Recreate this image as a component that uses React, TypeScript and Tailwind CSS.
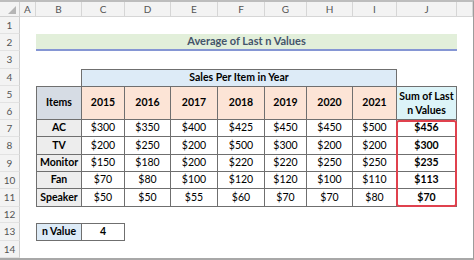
import React from "react";

const letters = ["A", "B", "C", "D", "E", "F", "G", "H", "I", "J", ""];
const colStart = [
  "col-start-1",
  "col-start-2",
  "col-start-3",
  "col-start-4",
  "col-start-5",
  "col-start-6",
  "col-start-7",
  "col-start-8",
  "col-start-9",
  "col-start-10",
  "col-start-11",
  "col-start-12",
];
const rowStart = [
  "row-start-1",
  "row-start-2",
  "row-start-3",
  "row-start-4",
  "row-start-5",
  "row-start-6",
  "row-start-7",
  "row-start-8",
  "row-start-9",
  "row-start-10",
  "row-start-11",
  "row-start-12",
  "row-start-13",
  "row-start-14",
  "row-start-15",
];

const years = [2015, 2016, 2017, 2018, 2019, 2020, 2021];

const items = [
  { name: "AC", sales: [300, 350, 400, 425, 450, 450, 500], sum: 456 },
  { name: "TV", sales: [200, 250, 200, 500, 300, 200, 200], sum: 300 },
  { name: "Monitor", sales: [150, 180, 200, 220, 220, 250, 250], sum: 235 },
  { name: "Fan", sales: [70, 80, 100, 120, 120, 100, 110], sum: 113 },
  { name: "Speaker", sales: [50, 50, 55, 60, 70, 70, 80], sum: 70 },
];

const line = "border-[#6f6f6f]";
const center = "flex items-center justify-center";

export default function App() {
  return (
    <div className="w-[474px] h-[260px] overflow-hidden bg-white border-t-2 border-t-[#bdbdbd] border-b-2 border-b-[#a8a8a8] border-r border-r-[#9c9c9c] font-[Lato,sans-serif] text-black">
      <div className="grid grid-cols-[20px_16px_46px_43px_46px_47px_47px_42px_46px_44px_60px_16px] grid-rows-[15px_17px_17px_18px_17px_17px_17px_17px_18px_17px_17px_18px_16px_18px_17px]">
        {/* corner */}
        <div className="col-start-1 row-start-1 relative bg-[#f3f3f3] border-r border-b border-[#d0d0d0]">
          <svg className="absolute right-[3px] bottom-[2px]" width="8" height="8" viewBox="0 0 8 8">
            <polygon points="8,0 8,8 0,8" fill="#b5b5b5" />
          </svg>
        </div>

        {/* column letters */}
        {letters.map((l, i) => (
          <div
            key={"c" + i}
            className={`${colStart[i + 1]} row-start-1 ${center} bg-[#f3f3f3] border-r border-b border-[#d6d6d6] text-[10px] text-[#555]`}
          >
            {l}
          </div>
        ))}

        {/* row numbers */}
        {Array.from({ length: 14 }).map((_, i) => (
          <div
            key={"r" + i}
            className={`col-start-1 ${rowStart[i + 1]} ${center} bg-[#f3f3f3] border-r border-r-[#cfcfcf] border-b border-b-[#e2e2e2] text-[10px] text-[#555]`}
          >
            {i + 1}
          </div>
        ))}

        {/* title */}
        <div
          className={`col-start-3 col-span-9 row-start-3 ${center} bg-[#e2efda] border-b-2 border-[#8596d4] text-[11px] font-bold text-[#44546a]`}
        >
          Average of Last n Values
        </div>

        {/* sales header */}
        <div
          className={`col-start-4 col-span-7 row-start-5 -ml-px ${center} bg-[#ddebf7] border-t border-l border-r ${line} text-[10.5px] font-bold`}
        >
          Sales Per Item in Year
        </div>

        {/* table header */}
        <div
          className={`col-start-3 row-start-6 row-span-2 ${center} bg-[#d6dce4] border ${line} text-[10.5px] font-bold`}
        >
          Items
        </div>
        {years.map((y, i) => (
          <div
            key={y}
            className={`${colStart[i + 3]} row-start-6 row-span-2 ${center} bg-[#fce4d6] border-t border-r border-b ${line} text-[10.5px] font-bold`}
          >
            {y}
          </div>
        ))}
        <div
          className={`col-start-11 row-start-6 row-span-2 flex flex-col items-center justify-center bg-[#dcf4f8] border-t border-r border-b ${line} text-[10.5px] font-bold leading-[14px]`}
        >
          <span>Sum of Last</span>
          <span>n Values</span>
        </div>

        {/* table body */}
        {items.map((it, r) => (
          <React.Fragment key={it.name}>
            <div
              className={`col-start-3 ${rowStart[r + 7]} ${center} bg-[#ededed] border-l border-r border-b ${line} text-[10.5px] font-bold`}
            >
              {it.name}
            </div>
            {it.sales.map((v, i) => (
              <div
                key={i}
                className={`${colStart[i + 3]} ${rowStart[r + 7]} ${center} border-r border-b ${line} text-[10.5px]`}
              >
                ${v}
              </div>
            ))}
            <div
              className={`col-start-11 ${rowStart[r + 7]} ${center} border-r border-b ${line} text-[10.5px] font-bold`}
            >
              ${it.sum}
            </div>
          </React.Fragment>
        ))}

        {/* highlight */}
        <div className="col-start-11 row-start-8 row-span-5 -ml-px border-2 border-[#e0414e] rounded-[3px]" />

        {/* n value */}
        <div
          className={`col-start-3 row-start-14 ${center} bg-[#ddebf7] border ${line} text-[10.5px] font-bold`}
        >
          n Value
        </div>
        <div
          className={`col-start-4 row-start-14 ${center} border-t border-r border-b ${line} text-[10.5px] font-bold`}
        >
          4
        </div>
      </div>
    </div>
  );
}
